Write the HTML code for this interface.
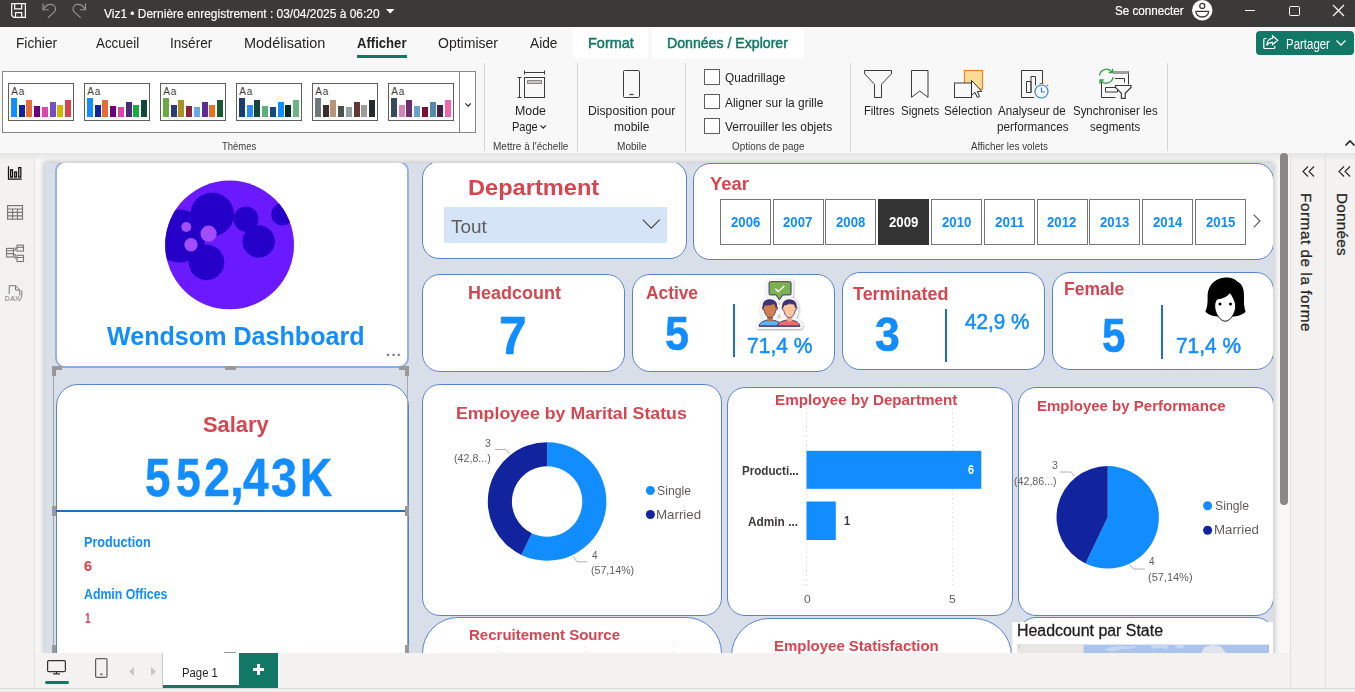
<!DOCTYPE html>
<html><head><meta charset="utf-8"><title>Viz1</title>
<style>
*{box-sizing:border-box;margin:0;padding:0}
html,body{width:1355px;height:692px;overflow:hidden;background:#f3f2f1;font-family:"Liberation Sans",sans-serif;}
.a{position:absolute}
.tx{position:absolute;white-space:nowrap;line-height:1em;transform-origin:0 50%;}
svg{position:absolute;overflow:visible}
#title{left:0;top:0;width:1355px;height:27px;background:#3b3a39}
#tabs{left:0;top:27px;width:1355px;height:126px;background:#f8f8f8}
.sep{position:absolute;top:63px;width:1px;height:88px;background:#d6d4d2}
#left{left:0;top:153px;width:35px;height:535px;background:#f3f2f1;border-right:1px solid #e5e3e1}
#canvasbg{left:35px;top:153px;width:1255px;height:500px;background:#f8f8f8;overflow:hidden}
#shadow{left:0;top:153px;width:1355px;height:8px;background:linear-gradient(#e3e3e3,rgba(240,240,240,0))}
#page{left:45px;top:162.5px;width:1228px;height:490.5px;background:#d8dfe9;overflow:hidden}
#pgsh{left:45px;top:162.5px;width:1228px;height:495px;box-shadow:0 0 6px 1px rgba(0,0,0,.24)}
.card{position:absolute;background:#fff;border:1px solid #5a83cf;border-radius:18px}
#bottom{left:35px;top:653px;width:1255px;height:35px;background:#f3f2f1}
#status{left:0;top:688px;width:1355px;height:4px;background:#f0f0f0;border-top:1px solid #dedede}
#rp1{left:1290px;top:153px;width:36px;height:535px;background:#f3f2f1;border-left:1px solid #e1dfdd}
#rp2{left:1325px;top:153px;width:30px;height:535px;background:#f3f2f1;border-left:1px solid #e1dfdd}
.vt{position:absolute;writing-mode:vertical-rl;font-size:15.3px;color:#252423;white-space:nowrap;line-height:1em}
.th{position:absolute;top:83px;width:66px;height:38px;border:1px solid #605e5c;background:#fff}
.th i{position:absolute;bottom:2.800px;width:5.900px}
.th b{position:absolute;left:2.300px;top:3px;font-size:10px;font-weight:normal;color:#3b3a39;letter-spacing:.8px;line-height:1em}
.cb{position:absolute;left:704.200px;width:15.600px;height:15.600px;border:1px solid #605e5c;background:#fff}
.yb{position:absolute;top:198.5px;width:51px;height:46px;border:1.200px solid #797775;background:#fff}
.h{position:absolute;background:#999}

</style></head><body>
<div id="title" class="a">
<!-- save / undo / redo -->
<svg style="left:0;top:0" width="100" height="27" viewBox="0 0 100 27" fill="none">
<g stroke="#fff" stroke-width="1.200"><path d="M11.700 3.700h13.700v13.700H13.700l-2-2z"/><path d="M14.700 3.700v5.200h7V3.700M15.500 17.400v-4.800h6.200v4.800"/></g>
<g stroke="#979593" stroke-width="1.150"><path d="M43 3.500v6.200h5.700"/><path d="M43.300 9.400c1.700-3.300 4.400-5 7.200-5 2.800 0 5 2 5 4.600 0 1.200-.4 2-1.200 2.800l-6.500 6"/>
<path d="M85.500 3.500v6.200h-5.700"/><path d="M85.200 9.400c-1.700-3.300-4.400-5-7.200-5-2.800 0-5 2-5 4.600 0 1.200.4 2 1.200 2.800l6.500 6"/></g>
</svg>
<svg style="left:386.300px;top:8.800px" width="8.500" height="4.500" viewBox="0 0 8.500 4.500"><path d="M0 0h8.500L4.250 4.500z" fill="#fff"/></svg>
<!-- user -->
<svg style="left:1192px;top:0px" width="20.500" height="20.500" viewBox="0 0 20.500 20.500"><circle cx="10.250" cy="10.250" r="10.200" fill="#fff"/><circle cx="10.250" cy="5.900" r="2.500" fill="none" stroke="#3b3a39" stroke-width="1.300"/><path d="M3.900 11.400h12.700c0 3.300-2.800 5.600-6.350 5.600s-6.350-2.300-6.350-5.600z" fill="none" stroke="#3b3a39" stroke-width="1.300"/></svg>
<!-- window controls -->
<div class="a" style="left:1244.900px;top:9.800px;width:10.500px;height:1.200px;background:#fff"></div>
<div class="a" style="left:1289px;top:5.500px;width:10.500px;height:10.500px;border:1.200px solid #fff;border-radius:1.500px"></div>
<svg style="left:1332.500px;top:5px" width="11" height="11" viewBox="0 0 11 11" stroke="#fff" stroke-width="1.200"><path d="M0 0l11 11M11 0L0 11"/></svg>
</div>
<div id="tabs" class="a"></div>
<!-- contextual tabs white -->
<div class="a" style="left:573px;top:28px;width:75px;height:30px;background:#fff"></div>
<div class="a" style="left:652px;top:28px;width:152px;height:30px;background:#fff"></div>
<div class="a" style="left:357px;top:55.200px;width:50px;height:2.900px;background:#117865"></div>
<!-- Partager -->
<div class="a" style="left:1256px;top:31.200px;width:98px;height:23.500px;background:#117865;border-radius:4px"></div>
<svg style="left:1263px;top:35px" width="16" height="15" viewBox="0 0 16 15" fill="none" stroke="#fff" stroke-width="1.200"><path d="M3.500 3.500H1.800a1 1 0 0 0-1 1v8a1 1 0 0 0 1 1h9a1 1 0 0 0 1-1v-1.500"/><path d="M9.500.8l5.200 4.500-5.200 4.500V7.300C6.500 7.300 4.800 8.300 3.800 10.500 4 6.500 6 3.800 9.500 3.300z"/></svg>
<svg style="left:1336px;top:40px" width="10" height="6" viewBox="0 0 10 6" fill="none" stroke="#fff" stroke-width="1.300"><path d="M.5.500L5 5 9.500.5"/></svg>
<!-- theme gallery -->
<div class="a" style="left:2px;top:70.700px;width:474px;height:62.200px;background:#fff;border:1px solid #8a8886"></div>
<div class="a" style="left:459px;top:71.500px;width:1px;height:61px;background:#8a8886"></div>
<svg style="left:464.700px;top:103.200px" width="6.300" height="4.500" viewBox="0 0 7 5" fill="none" stroke="#252423" stroke-width="1.200"><path d="M.5.500l3 3 3-3"/></svg>
<div class="th" style="left:8px"><b>Aa</b><i style="left:2.00px;height:18.9px;background:#118dff"></i><i style="left:9.74px;height:11.9px;background:#12239e"></i><i style="left:17.48px;height:17.5px;background:#e66c37"></i><i style="left:25.22px;height:10.9px;background:#6b007b"></i><i style="left:32.96px;height:10.4px;background:#e044a7"></i><i style="left:40.70px;height:15.4px;background:#744ec2"></i><i style="left:48.44px;height:12.4px;background:#d9b300"></i><i style="left:56.18px;height:17.5px;background:#d64550"></i></div>
<div class="th" style="left:84px"><b>Aa</b><i style="left:2.00px;height:18.9px;background:#118dff"></i><i style="left:9.74px;height:11.9px;background:#12239e"></i><i style="left:17.48px;height:17.5px;background:#e66c37"></i><i style="left:25.22px;height:10.9px;background:#6b007b"></i><i style="left:32.96px;height:10.4px;background:#e044a7"></i><i style="left:40.70px;height:15.4px;background:#4a2d7a"></i><i style="left:48.44px;height:12.4px;background:#1aab40"></i><i style="left:56.18px;height:17.5px;background:#15463c"></i></div>
<div class="th" style="left:160px"><b>Aa</b><i style="left:2.00px;height:18.9px;background:#6aaa40"></i><i style="left:9.74px;height:11.9px;background:#2e3a77"></i><i style="left:17.48px;height:17.5px;background:#ab9121"></i><i style="left:25.22px;height:10.9px;background:#8c2238"></i><i style="left:32.96px;height:10.4px;background:#6aa8e0"></i><i style="left:40.70px;height:15.4px;background:#5c2c92"></i><i style="left:48.44px;height:12.4px;background:#e8701f"></i><i style="left:56.18px;height:17.5px;background:#1d5632"></i></div>
<div class="th" style="left:236px"><b>Aa</b><i style="left:2.00px;height:18.9px;background:#1a3c73"></i><i style="left:9.74px;height:11.9px;background:#2a8cff"></i><i style="left:17.48px;height:17.5px;background:#15463c"></i><i style="left:25.22px;height:10.9px;background:#5fae7b"></i><i style="left:32.96px;height:10.4px;background:#164a7d"></i><i style="left:40.70px;height:15.4px;background:#118dff"></i><i style="left:48.44px;height:12.4px;background:#0c2a22"></i><i style="left:56.18px;height:17.5px;background:#6bb584"></i></div>
<div class="th" style="left:312px"><b>Aa</b><i style="left:2.00px;height:18.9px;background:#6e7b7b"></i><i style="left:9.74px;height:11.9px;background:#3b2c2c"></i><i style="left:17.48px;height:17.5px;background:#b8957a"></i><i style="left:25.22px;height:10.9px;background:#4a4f4f"></i><i style="left:32.96px;height:10.4px;background:#8fa3a3"></i><i style="left:40.70px;height:15.4px;background:#5e3a32"></i><i style="left:48.44px;height:12.4px;background:#a09b94"></i><i style="left:56.18px;height:17.5px;background:#252a2c"></i></div>
<div class="th" style="left:388px"><b>Aa</b><i style="left:2.00px;height:18.9px;background:#384a5e"></i><i style="left:9.74px;height:11.9px;background:#d383b6"></i><i style="left:17.48px;height:17.5px;background:#6c2e6c"></i><i style="left:25.22px;height:10.9px;background:#6aa2cf"></i><i style="left:32.96px;height:10.4px;background:#7a0e3a"></i><i style="left:40.70px;height:15.4px;background:#5588aa"></i><i style="left:48.44px;height:12.4px;background:#41234a"></i><i style="left:56.18px;height:17.5px;background:#f066ac"></i></div>
<div class="sep" style="left:484px"></div><div class="sep" style="left:576.500px"></div><div class="sep" style="left:685px"></div><div class="sep" style="left:850px"></div><div class="sep" style="left:1166.500px"></div>
<!-- Mode page icon -->
<svg style="left:517px;top:70px" width="29" height="28" viewBox="0 0 29 28" fill="none" stroke="#3b3a39" stroke-width="1"><path d="M7.500 2.500h20M7.500.5v4M27.500.5v4"/><path d="M2.500 7.500v20M.5 7.500h4M.5 27.500h4"/><rect x="7.500" y="7.500" width="20" height="20"/><rect x="10.500" y="10.500" width="14" height="3" fill="#c8c6c4" stroke="#8a8886"/></svg>
<svg style="left:540.300px;top:125.300px" width="6.300" height="4.500" viewBox="0 0 7 5" fill="none" stroke="#252423" stroke-width="1.200"><path d="M.5.500l3 3 3-3"/></svg>
<!-- mobile icon -->
<svg style="left:623px;top:70px" width="17" height="28" viewBox="0 0 17 28" fill="none" stroke="#3b3a39" stroke-width="1"><rect x=".5" y=".5" width="16" height="27" rx="1"/><path d="M6.500 24.500h4" stroke-width="1.200"/></svg>
<div class="cb" style="top:69.200px"></div><div class="cb" style="top:93.700px"></div><div class="cb" style="top:118.200px"></div>
<!-- filter -->
<svg style="left:864.200px;top:70px" width="28" height="28" viewBox="0 0 28 28" fill="none" stroke="#3b3a39" stroke-width="1"><path d="M.5.500h27v3.200L17.500 14.300v13.200h-7V14.300L.5 3.700z"/></svg>
<!-- bookmark -->
<svg style="left:910.800px;top:70px" width="17.500" height="28" viewBox="0 0 17.500 28" fill="none" stroke="#3b3a39" stroke-width="1"><path d="M.5.500h16.500v26.800l-8.250-6.300-8.250 6.300z"/></svg>
<!-- selection -->
<svg style="left:954px;top:70px" width="32" height="30" viewBox="0 0 32 30"><rect x="10.500" y=".5" width="18" height="18.500" fill="#fbdc97" stroke="#e8852b" stroke-width="1.200"/><rect x=".5" y="13" width="17" height="14.500" fill="#f8f8f8" stroke="#3b3a39" stroke-width="1"/><path d="M17.500 10.500v15l3.500-3.200 2.300 5.200 2.300-1-2.300-5 4.500-.2z" fill="#fff" stroke="#252423" stroke-width="1"/></svg>
<!-- analyseur -->
<svg style="left:1020.500px;top:70px" width="29" height="30" viewBox="0 0 29 30" fill="none" stroke="#3b3a39" stroke-width="1"><path d="M13 27.500H.5V.5h21v13"/><path d="M5.500 22.500v-11h4.500v11zM10 22.500V6.500h4.500v9"/><circle cx="20.500" cy="21.500" r="6.500" stroke="#2b88d8" stroke-width="1.200" fill="#f8f8f8"/><path d="M20.500 17.500v4.500h3.500M18.500 13.500h4M26 15l1.200 1.200" stroke="#2b88d8" stroke-width="1.200"/></svg>
<!-- synchroniser -->
<svg style="left:1098px;top:68px" width="34" height="31" viewBox="0 0 34 31" fill="none" stroke="#3b3a39" stroke-width="1"><path d="M15 3.500h15.500v13"/><rect x="15" y="3" width="15.500" height="3" fill="#a19f9d" stroke="none"/><path d="M17 10.500h9.500v4M3.500 14v15.500h14"/><path d="M7.500 19.500h12v4.500h-12z"/><path d="M17.500 17.500h15.500v2l-5.800 5.800v5h-3.800v-5l-5.900-5.800z" fill="#f8f8f8" stroke-width="1.200"/><path d="M1.500 7.500a7 7 0 0 1 12.500-3.500M15 9a7 7 0 0 1-12.500 3.500" stroke="#2ca045" stroke-width="1.300"/><path d="M14.500.8v3.700h-3.700M2 15.700v-3.700h3.700" stroke="#2ca045" stroke-width="1.300"/></svg>
<svg style="left:1345px;top:140px" width="10" height="6" viewBox="0 0 10 6" fill="none" stroke="#252423" stroke-width="1.600"><path d="M.5 5.500L5 1l4.500 4.500"/></svg>
<div id="left" class="a"></div>
<div id="canvasbg" class="a"><div id="pgsh" class="a" style="left:10px;top:9.500px"></div></div>
<div id="rp1" class="a"></div><div id="rp2" class="a"></div>
<div id="shadow" class="a"></div>
<!-- left icons -->
<svg style="left:0;top:0" width="35" height="320" viewBox="0 0 35 320" fill="none">
<g stroke="#111" stroke-width="1.250"><path d="M8.500 166.200v12.900h13.300"/><rect x="10.600" y="169.800" width="1.900" height="7.300"/><rect x="14.700" y="172" width="1.800" height="5.100"/><rect x="18.700" y="167.600" width="2.100" height="9.500"/></g>
<g stroke="#797775" stroke-width="1.200"><rect x="7.600" y="205.600" width="14.900" height="13.600"/><path d="M7.600 209h14.900M7.600 212.400h14.900M7.600 215.800h14.900M12.600 209v10.200M17.500 209v10.200"/></g>
<g stroke="#797775" stroke-width="1.100"><rect x="17" y="245.100" width="6.500" height="6"/><path d="M17 247.300h6.500"/><rect x="6.500" y="248.400" width="7" height="8.600"/><path d="M6.500 250.800h7M6.500 253.600h7"/><rect x="17" y="255.300" width="6.500" height="6.200"/><path d="M17 257.500h6.500M13.500 250.300h1.700v-2.300h1.800M13.500 254.500h1.700v3.800h1.800"/></g>
<g stroke="#797775" stroke-width="1"><path d="M9.200 294v-8.300h6.300l4.300 4.300v5.500M15.500 285.700v4.300h4.300"/><path d="M21.800 290.500c.4 4.500-.3 8-2.300 10.200"/></g>
</svg>
<span class="tx" style="left:4.800px;top:295.300px;font-size:7px;color:#797775;letter-spacing:.3px">DAX</span>
<!-- right panes -->
<svg style="left:1302px;top:165.500px" width="13" height="11" viewBox="0 0 13 11" fill="none" stroke="#252423" stroke-width="1.100"><path d="M6 .5l-5 5 5 5M12 .5l-5 5 5 5"/></svg>
<svg style="left:1337.500px;top:165.500px" width="13" height="11" viewBox="0 0 13 11" fill="none" stroke="#252423" stroke-width="1.100"><path d="M6 .5l-5 5 5 5M12 .5l-5 5 5 5"/></svg>
<div class="vt" style="left:1299px;top:192.500px;letter-spacing:.55px;-webkit-text-stroke:.25px #252423">Format de la forme</div>
<div class="vt" style="left:1334.400px;top:192.800px;letter-spacing:.25px;-webkit-text-stroke:.25px #252423">Données</div>
<!-- scrollbar -->
<div class="a" style="left:1280px;top:153px;width:7.500px;height:352px;background:#8a8886;border-radius:4px"></div>
<div id="page" class="a">
<!-- all coords inside page are relative: px = X-45, py = Y-162.5 -->
<div class="card" style="left:10px;top:-2px;width:353.500px;height:207.300px;border-radius:10px;border:2px solid #98b1df"></div>
<div class="card" style="left:10.500px;top:221.300px;width:353px;height:300px;border-radius:22px"></div>
<div class="card" style="left:377px;top:-1.200px;width:265px;height:97.200px;border-radius:17px"></div>
<div class="card" style="left:647.500px;top:.4px;width:581.800px;height:96.900px;border-radius:17px"></div>
<div class="card" style="left:377px;top:111.500px;width:203px;height:97.500px"></div>
<div class="card" style="left:587px;top:111.500px;width:203px;height:97.500px"></div>
<div class="card" style="left:796.500px;top:109.500px;width:203px;height:97.500px"></div>
<div class="card" style="left:1007px;top:109.500px;width:222.300px;height:97.500px"></div>
<div class="card" style="left:377px;top:221.400px;width:299.500px;height:232.100px"></div>
<div class="card" style="left:682px;top:224.300px;width:285.500px;height:228.800px"></div>
<div class="card" style="left:973px;top:224.200px;width:256.300px;height:229px"></div>
<div class="card" style="left:377px;top:454.500px;width:299.500px;height:100px;border-radius:36px"></div>
<div class="card" style="left:686px;top:455.500px;width:280.500px;height:100px;border-radius:38px"></div>
<div class="card" style="left:973px;top:454.500px;width:256.300px;height:100px"></div>
<!-- moon -->
<svg style="left:120px;top:17.500px" width="130" height="130" viewBox="165 180 130 130">
<defs><clipPath id="mc"><circle cx="229.600" cy="244.900" r="64.400"/></clipPath></defs>
<circle cx="229.600" cy="244.900" r="64.400" fill="#6b1aff"/>
<g clip-path="url(#mc)" fill="#2400c8"><circle cx="212.200" cy="214.400" r="21.800"/><circle cx="179.200" cy="235.900" r="26.500"/><circle cx="206.500" cy="262.400" r="17.800"/><circle cx="258.700" cy="241.400" r="16.200"/><circle cx="246" cy="219.100" r="12.500"/><circle cx="282.400" cy="214.400" r="11.100"/></g>
<g fill="#a24dff"><circle cx="186.300" cy="227" r="5"/><circle cx="208.600" cy="233.700" r="8.100"/><circle cx="191" cy="244.800" r="6.700"/></g>
</svg>
<span class="tx" style="left:341px;top:181.500px;font-size:14.500px;color:#7a7876;letter-spacing:1.400px;font-weight:bold">...</span>
<!-- salary divider -->
<div class="a" style="left:11px;top:347.500px;width:352px;height:2px;background:#1f6fc4"></div>
<!-- department slicer -->
<div class="a" style="left:399px;top:44.700px;width:223px;height:35.600px;background:#d5e5f7"></div>
<svg style="left:597.200px;top:56.700px" width="18.500" height="10" viewBox="0 0 20 11" fill="none" stroke="#444" stroke-width="1.300"><path d="M.7.700L10 10 19.300.7"/></svg>
<!-- years -->
<div class="yb" style="left:674.7px;top:36px"></div>
<div class="yb" style="left:727.5px;top:36px"></div>
<div class="yb" style="left:780.3px;top:36px"></div>
<div class="yb" style="left:833.1px;top:36px;background:#333;border-color:#333"></div>
<div class="yb" style="left:885.9px;top:36px"></div>
<div class="yb" style="left:938.7px;top:36px"></div>
<div class="yb" style="left:991.5px;top:36px"></div>
<div class="yb" style="left:1044.3px;top:36px"></div>
<div class="yb" style="left:1097.1px;top:36px"></div>
<div class="yb" style="left:1149.9px;top:36px"></div>

<svg style="left:1208.300px;top:51.500px" width="8" height="14" viewBox="0 0 8 14" fill="none" stroke="#605e5c" stroke-width="1.200"><path d="M.7.700L7 7 .7 13.300"/></svg>
<!-- KPI vlines -->
<div class="a" style="left:688.300px;top:141.600px;width:2px;height:53.200px;background:#1b6fc6"></div>
<div class="a" style="left:900.200px;top:146.500px;width:2px;height:53px;background:#1b6fc6"></div>
<div class="a" style="left:1116.400px;top:142.500px;width:2px;height:53.500px;background:#1b6fc6"></div>
<svg style="left:0;top:0" width="1229" height="490.500" viewBox="45 162.500 1229 490.500">
<defs><filter id="sh" x="-20%" y="-20%" width="140%" height="140%"><feDropShadow dx=".6" dy=".8" stdDeviation=".8" flood-color="#000" flood-opacity=".4"/></filter></defs>
<g transform="translate(-.2 .2)"><!-- people icon : white sticker base -->
<g filter="url(#sh)" fill="#f7f7f7" stroke="#f7f7f7" stroke-width="5.600" stroke-linejoin="round">
<path d="M769.500 281h21v13h-7.500l-3.400 5.200-3.400-5.200h-6.700z"/>
<path d="M759 325.500c.5-3.500 3-5 7.500-6v-3c-3-2-3.500-5-3.500-8 0-6 3-9.500 7-9.500s7 3.500 7 9.500c0 3-.5 6-3.500 8v3l6 1.300 6-1.300v-3c-3-2-3.500-5-3.500-8 0-6 3-9.500 7-9.500s7 3.500 7 9.500c0 3-.5 6-3.500 8v3c4.500 1 7 2.500 7.500 6z"/>
</g>
<!-- bubble -->
<path d="M770.500 281h19.500a1.200 1.200 0 0 1 1.200 1.200v10.800a1.200 1.200 0 0 1-1.200 1.200h-7l-3.400 5-3.400-5h-5.700a1.200 1.200 0 0 1-1.200-1.200v-10.800a1.200 1.200 0 0 1 1.200-1.200z" fill="#7db04e" stroke="#3c3170" stroke-width="1"/>
<path d="M775.500 288l3 2.800 6-5.500" fill="none" stroke="#fff" stroke-width="1.300"/>
<!-- left person -->
<path d="M759.300 325.300c.5-3.300 3-4.800 8.200-5.800h5.600c3 .6 5 1.300 6.300 2.300l-1.800 3.500z" fill="#5cb1f5" stroke="#3c3170" stroke-width=".9"/>
<path d="M767.500 316v3.800c1.500 1.200 4 1.200 5.500 0V316z" fill="#c07040"/>
<path d="M764.200 306c-1.300-.3-1.800.8-1.500 2 .3 1 1 1.500 1.800 1.500.5 4 2.700 7.500 5.700 7.500s5.200-3.500 5.700-7.500c.8 0 1.500-.5 1.800-1.500.3-1.200-.2-2.300-1.500-2v-3h-12z" fill="#d17f4b" stroke="#3c3170" stroke-width=".8"/>
<path d="M763 307.500c-1-5.500 2-9 7-9s8.500 3.500 7 9l-1.200-.2c-.2-1.800-.8-3.300-1.800-4.300-2.500 1.600-6 2-9 1.500-.4.800-.7 1.800-.8 2.800z" fill="#3f3373"/>
<!-- right person -->
<path d="M778 325.300c.5-3.300 3-4.800 8.200-5.800h5.600c5.200 1 7.700 2.500 8.200 5.800z" fill="#f06a6a" stroke="#3c3170" stroke-width=".9"/>
<path d="M787 316v3.800c1.500 1.200 4 1.200 5.500 0V316z" fill="#eeb088"/>
<path d="M783.700 306c-1.300-.3-1.800.8-1.500 2 .3 1 1 1.500 1.800 1.500.5 4 2.700 7.500 5.700 7.500s5.200-3.500 5.700-7.500c.8 0 1.500-.5 1.800-1.500.3-1.200-.2-2.300-1.500-2v-3h-12z" fill="#fcc59b" stroke="#3c3170" stroke-width=".8"/>
<path d="M782.500 307.500c-1-5.500 2-9 7-9s8.500 3.500 7 9l-1.200-.2c-.2-1.500-.6-2.800-1.300-3.800-1.500.3-3-.3-4-1.500-1.500 1.800-3.700 2.700-6 2.700-.3.800-.4 1.700-.5 2.600z" fill="#3f3373"/>
<path d="M759 325.500h41.500" stroke="#3c3170" stroke-width="1.100"/>
</g><!-- woman icon -->
<path d="M1225 277c7-.5 10.500 2 12.500 4.300 5 2.200 6.800 8 6.500 15-.2 6 .2 11.500 1.600 15 -3.500 3.500-9 4.700-13.500 4.800l-13.500 0c-4.500 0-9.700-1.300-13.300-4.800 2-4 2.500-9 2.300-15-.3-9 5-18.300 17.400-19.300z" fill="#000"/>
<path d="M1230 292c2.500 3.500 5.700 9 5.700 13.500 0 7-5.500 15.200-10.500 15.200s-10.500-8.200-10.500-15.200c0-3 1-5.500 2.500-7 6-.8 10.500-3 12.800-6.500z" fill="#fff" stroke="#000" stroke-width=".9"/>
<circle cx="1220" cy="303.400" r="1.500"/><circle cx="1230.500" cy="303.400" r="1.500"/>
</svg>

<svg style="left:0;top:0" width="1229" height="490.500" viewBox="45 162.500 1229 490.500">
<!-- donut -->
<g transform="translate(0 -.8)"><path d="M547.100 442.500A59.300 59.300 0 1 1 521.370 555.230L531.830 533.510A35.200 35.200 0 1 0 547.100 466.600z" fill="#118dff"/>
<path d="M521.370 555.230A59.300 59.300 0 0 1 547.100 442.500V466.600A35.200 35.200 0 0 0 531.830 533.510z" fill="#12239e"/></g>
<path d="M494.800 449h11.200l4.100 4.500M573.300 555.900l3.600 5.400h10.400" fill="none" stroke="#b3b0ad" stroke-width="1"/>
<circle cx="650.400" cy="490" r="4.500" fill="#118dff"/><circle cx="650.400" cy="514" r="4.500" fill="#12239e"/>
<!-- bars -->
<path d="M806.500 408v180M952.400 408v180" stroke="#cfcdcb" stroke-width="1" stroke-dasharray="1 3.500"/>
<rect x="806.500" y="450.300" width="174.800" height="38" fill="#118dff"/>
<rect x="806.500" y="501" width="29.300" height="38.500" fill="#118dff"/>
<!-- pie -->
<path d="M1107.700 516.800V465.600A51.200 51.200 0 1 1 1085.500 562.930z" fill="#118dff"/>
<path d="M1107.700 516.800L1085.500 562.930A51.200 51.200 0 0 1 1107.700 465.600z" fill="#12239e"/>
<path d="M1059.700 471.500h11.300l3.600 4.100M1129.600 564l4.100 4.500h11.300" fill="none" stroke="#b3b0ad" stroke-width="1"/>
<circle cx="1207.600" cy="505.300" r="4.500" fill="#118dff"/><circle cx="1207.600" cy="529.700" r="4.500" fill="#12239e"/>
<!-- headcount par state -->
<rect x="1012.300" y="621.500" width="261" height="32" fill="#fff"/>
<rect x="1017" y="644.100" width="252" height="10" fill="#aac4ee"/>
<rect x="1017" y="644.100" width="66.500" height="10" fill="#e9e7e2"/>
<path d="M1017 644.100l4 3.500M1021 644.100l-3.500 4" stroke="#c9d6c0" stroke-width="1"/>
<g fill="#c7d5ee"><path d="M1104.2 649.3l6.2 -2.9 10.3 -1.2 8.3 0.8 8.3 -0.8 -4.1 2.9 -12.4 0.8 -8.3 2.1z"/><path d="M1149.7 644.1h18.6l-1.0 5.2 -6.2 -2.1 -8.3 1.0z"/><path d="M1174.5 644.7l10.3 -0.4 -2.1 3.3 -6.2 0.4z"/></g><path d="M1201.3 652.8l3.1 -6.2 8.3 -2.1 8.3 1.7 5.2 6.6z" fill="#dfe4ec"/>
<!-- recruit gridlines -->
<path d="M498 646v8M585.600 646v8M673.400 642v12" stroke="#d6d4d2" stroke-width="1" stroke-dasharray="1 3.500"/>
</svg>

</div>
<!-- selection frame -->
<div class="a" style="left:53px;top:367px;width:354.500px;height:1.200px;background:#a6a6a6"></div>
<div class="a" style="left:53px;top:367px;width:1px;height:284px;background:#a6a6a6"></div>
<div class="a" style="left:406.500px;top:367px;width:1px;height:284px;background:#a6a6a6"></div>
<div class="h" style="left:52px;top:366px;width:10px;height:4px"></div><div class="h" style="left:52px;top:366px;width:4px;height:10px"></div>
<div class="h" style="left:399px;top:366px;width:10px;height:4px"></div><div class="h" style="left:405px;top:366px;width:4px;height:10px"></div>
<div class="h" style="left:224.500px;top:366px;width:11px;height:4px"></div>
<div class="h" style="left:52px;top:506px;width:4px;height:10px"></div><div class="h" style="left:405px;top:506px;width:4px;height:10px"></div>
<div class="h" style="left:52px;top:645px;width:4px;height:8px"></div><div class="h" style="left:405px;top:645px;width:4px;height:8px"></div>
<div class="h" style="left:224.300px;top:651.700px;width:11.500px;height:1.300px"></div>
<div id="bottom" class="a"></div>
<!-- bottom bar -->
<svg style="left:46.900px;top:660px" width="19" height="14.500" viewBox="0 0 19 14.500" fill="none" stroke="#323130" stroke-width="1.200"><rect x=".6" y=".6" width="17.800" height="11" rx="1.200"/><path d="M9.500 11.600v2.200M6 13.800h7"/></svg>
<div class="a" style="left:45px;top:681px;width:24px;height:3px;background:#117865;border-radius:1.500px"></div>
<svg style="left:94.800px;top:658px" width="12.600" height="20" viewBox="0 0 12.600 20" fill="none" stroke="#605e5c" stroke-width="1.200"><rect x=".6" y=".6" width="11.400" height="18.800" rx="1.500"/><path d="M5.200 16.300h2.400" stroke-width="1.500"/></svg>
<svg style="left:129px;top:667px" width="5" height="9" viewBox="0 0 5 9"><path d="M5 0v9L0 4.500z" fill="#c8c6c4"/></svg>
<svg style="left:151px;top:667px" width="5" height="9" viewBox="0 0 5 9"><path d="M0 0v9l5-4.500z" fill="#c8c6c4"/></svg>
<div class="a" style="left:162.500px;top:653px;width:76.200px;height:35px;background:#fff;border-bottom:3.600px solid #117865;"></div><div class="a" style="left:162.200px;top:653px;width:1px;height:35px;background:#c8c6c4"></div>
<div class="a" style="left:238.800px;top:653px;width:39px;height:35px;background:#117865"></div>
<div class="a" style="left:252.800px;top:668.200px;width:11px;height:2.600px;background:#fff"></div><div class="a" style="left:257px;top:664px;width:2.600px;height:11px;background:#fff"></div>
<div id="status" class="a"></div>

<!--TEXT-->
<span class="tx" style="left:104.07px;top:8.00px;font-size:12px;color:#fff;-webkit-text-stroke:0.15px #fff;transform:scaleX(0.9953);">Viz1 • Dernière enregistrement : 03/04/2025 à 06:20</span>
<span class="tx" style="left:1114.59px;top:5.30px;font-size:12.5px;color:#fff;-webkit-text-stroke:0.2px #fff;transform:scaleX(0.9322);">Se connecter</span>
<span class="tx" style="left:16.08px;top:36.20px;font-size:14.8px;color:#252423;transform:scaleX(0.9248);">Fichier</span>
<span class="tx" style="left:95.90px;top:36.20px;font-size:14.8px;color:#252423;transform:scaleX(0.9048);">Accueil</span>
<span class="tx" style="left:170.48px;top:36.20px;font-size:14.8px;color:#252423;transform:scaleX(0.9175);">Insérer</span>
<span class="tx" style="left:244.42px;top:36.20px;font-size:14.8px;color:#252423;transform:scaleX(0.9787);">Modélisation</span>
<span class="tx" style="left:357.00px;top:36.20px;font-size:14.8px;color:#252423;font-weight:bold;transform:scaleX(0.8851);">Afficher</span>
<span class="tx" style="left:437.90px;top:36.20px;font-size:14.8px;color:#252423;transform:scaleX(0.9483);">Optimiser</span>
<span class="tx" style="left:530.00px;top:36.20px;font-size:14.8px;color:#252423;transform:scaleX(0.9290);">Aide</span>
<span class="tx" style="left:587.67px;top:36.20px;font-size:14.8px;color:#117865;-webkit-text-stroke:0.5px #117865;transform:scaleX(0.9773);">Format</span>
<span class="tx" style="left:667.48px;top:36.20px;font-size:14.8px;color:#117865;-webkit-text-stroke:0.5px #117865;transform:scaleX(0.9546);">Données / Explorer</span>
<span class="tx" style="left:1286.48px;top:36.50px;font-size:14px;color:#fff;transform:scaleX(0.8183);">Partager</span>
<span class="tx" style="left:515.00px;top:105.00px;font-size:12px;color:#252423;transform:scaleX(1.0315);">Mode</span>
<span class="tx" style="left:511.80px;top:121.00px;font-size:12px;color:#252423;transform:scaleX(0.9171);">Page</span>
<span class="tx" style="left:588.40px;top:105.00px;font-size:12px;color:#252423;transform:scaleX(1.0157);">Disposition pour</span>
<span class="tx" style="left:613.50px;top:121.00px;font-size:12px;color:#252423;transform:scaleX(1.0007);">mobile</span>
<span class="tx" style="left:864.00px;top:105.00px;font-size:12px;color:#252423;transform:scaleX(0.9337);">Filtres</span>
<span class="tx" style="left:900.80px;top:105.00px;font-size:12px;color:#252423;transform:scaleX(0.9544);">Signets</span>
<span class="tx" style="left:943.50px;top:105.00px;font-size:12px;color:#252423;transform:scaleX(0.9755);">Sélection</span>
<span class="tx" style="left:998.00px;top:105.00px;font-size:12px;color:#252423;transform:scaleX(0.9663);">Analyseur de</span>
<span class="tx" style="left:996.70px;top:121.00px;font-size:12px;color:#252423;transform:scaleX(0.9746);">performances</span>
<span class="tx" style="left:1072.70px;top:105.00px;font-size:12px;color:#252423;transform:scaleX(0.9537);">Synchroniser les</span>
<span class="tx" style="left:1089.80px;top:121.00px;font-size:12px;color:#252423;transform:scaleX(0.9649);">segments</span>
<span class="tx" style="left:724.70px;top:71.80px;font-size:12px;color:#252423;transform:scaleX(0.9838);">Quadrillage</span>
<span class="tx" style="left:724.70px;top:97.00px;font-size:12px;color:#252423;transform:scaleX(0.9956);">Aligner sur la grille</span>
<span class="tx" style="left:724.70px;top:120.80px;font-size:12px;color:#252423;transform:scaleX(0.9912);">Verrouiller les objets</span>
<span class="tx" style="left:222.00px;top:141.00px;font-size:10.5px;color:#3b3a39;transform:scaleX(0.9024);">Thèmes</span>
<span class="tx" style="left:492.80px;top:141.00px;font-size:10.5px;color:#3b3a39;transform:scaleX(0.9545);">Mettre à l'échelle</span>
<span class="tx" style="left:616.80px;top:141.00px;font-size:10.5px;color:#3b3a39;transform:scaleX(0.9585);">Mobile</span>
<span class="tx" style="left:732.00px;top:141.00px;font-size:10.5px;color:#3b3a39;transform:scaleX(0.9415);">Options de page</span>
<span class="tx" style="left:971.00px;top:141.00px;font-size:10.5px;color:#3b3a39;transform:scaleX(0.9359);">Afficher les volets</span>
<span class="tx" style="left:107.30px;top:324.20px;font-size:25.6px;color:#118dff;font-weight:bold;transform:scaleX(0.9809);">Wendsom Dashboard</span>
<span class="tx" style="left:202.60px;top:414.00px;font-size:22.5px;color:#d64550;font-weight:bold;transform:scaleX(0.9729);">Salary</span>
<span class="tx" style="left:145.47px;top:450.10px;font-size:54px;color:#118dff;font-weight:bold;-webkit-text-stroke:0.5px #118dff;transform:scaleX(0.8456);">5</span>
<span class="tx" style="left:175.58px;top:450.10px;font-size:54px;color:#118dff;font-weight:bold;-webkit-text-stroke:0.5px #118dff;transform:scaleX(0.8211);">5</span>
<span class="tx" style="left:204.45px;top:450.10px;font-size:54px;color:#118dff;font-weight:bold;-webkit-text-stroke:0.5px #118dff;transform:scaleX(0.8655);">2</span>
<span class="tx" style="left:229.85px;top:450.10px;font-size:54px;color:#118dff;font-weight:bold;-webkit-text-stroke:0.5px #118dff;transform:scaleX(0.9263);">,</span>
<span class="tx" style="left:242.71px;top:450.10px;font-size:54px;color:#118dff;font-weight:bold;-webkit-text-stroke:0.5px #118dff;transform:scaleX(0.8525);">4</span>
<span class="tx" style="left:270.55px;top:450.10px;font-size:54px;color:#118dff;font-weight:bold;-webkit-text-stroke:0.5px #118dff;transform:scaleX(0.8632);">3</span>
<span class="tx" style="left:300.34px;top:450.10px;font-size:54px;color:#118dff;font-weight:bold;-webkit-text-stroke:0.5px #118dff;transform:scaleX(0.8219);">K</span>
<span class="tx" style="left:84.00px;top:535.00px;font-size:14px;color:#118dff;font-weight:bold;transform:scaleX(0.9041);">Production</span>
<span class="tx" style="left:84.00px;top:558.50px;font-size:14.5px;color:#d64550;font-weight:bold;transform:scaleX(1.0000);">6</span>
<span class="tx" style="left:84.00px;top:587.00px;font-size:14px;color:#118dff;font-weight:bold;transform:scaleX(0.8779);">Admin Offices</span>
<span class="tx" style="left:84.50px;top:610.50px;font-size:14.5px;color:#d64550;font-weight:bold;transform:scaleX(0.6875);">1</span>
<span class="tx" style="left:467.89px;top:177.00px;font-size:21.2px;color:#d64550;font-weight:bold;transform:scaleX(1.1142);">Department</span>
<span class="tx" style="left:451.00px;top:219.30px;font-size:17.6px;color:#605e5c;transform:scaleX(1.0789);">Tout</span>
<span class="tx" style="left:710.40px;top:175.30px;font-size:18.8px;color:#d64550;font-weight:bold;transform:scaleX(0.9807);">Year</span>
<span class="tx" style="left:468.00px;top:284.00px;font-size:18px;color:#d64550;font-weight:bold;transform:scaleX(0.9988);">Headcount</span>
<span class="tx" style="left:499.33px;top:309.20px;font-size:53.5px;color:#118dff;font-weight:bold;-webkit-text-stroke:0.6px #118dff;transform:scaleX(0.9248);">7</span>
<span class="tx" style="left:645.90px;top:284.00px;font-size:18px;color:#d64550;font-weight:bold;transform:scaleX(0.9627);">Active</span>
<span class="tx" style="left:665.38px;top:309.20px;font-size:49px;color:#118dff;font-weight:bold;-webkit-text-stroke:0.6px #118dff;transform:scaleX(0.8789);">5</span>
<span class="tx" style="left:746.56px;top:336.30px;font-size:21.3px;color:#118dff;-webkit-text-stroke:0.5px #118dff;transform:scaleX(0.9884);">71,4 %</span>
<span class="tx" style="left:853.00px;top:285.30px;font-size:18px;color:#d64550;font-weight:bold;transform:scaleX(0.9969);">Terminated</span>
<span class="tx" style="left:875.06px;top:309.60px;font-size:49px;color:#118dff;font-weight:bold;-webkit-text-stroke:0.6px #118dff;transform:scaleX(0.9102);">3</span>
<span class="tx" style="left:964.84px;top:311.80px;font-size:21.3px;color:#118dff;-webkit-text-stroke:0.5px #118dff;transform:scaleX(0.9706);">42,9 %</span>
<span class="tx" style="left:1064.23px;top:280.30px;font-size:18px;color:#d64550;font-weight:bold;transform:scaleX(0.9718);">Female</span>
<span class="tx" style="left:1102.40px;top:310.70px;font-size:49px;color:#118dff;font-weight:bold;-webkit-text-stroke:0.6px #118dff;transform:scaleX(0.8594);">5</span>
<span class="tx" style="left:1176.27px;top:336.00px;font-size:21.3px;color:#118dff;-webkit-text-stroke:0.5px #118dff;transform:scaleX(0.9792);">71,4 %</span>
<span class="tx" style="left:456.38px;top:404.60px;font-size:17.4px;color:#d64550;font-weight:bold;transform:scaleX(1.0206);">Employee by Marital Status</span>
<span class="tx" style="left:484.50px;top:437.60px;font-size:11.5px;color:#605e5c;transform:scaleX(0.9167);">3</span>
<span class="tx" style="left:454.20px;top:452.80px;font-size:11.5px;color:#605e5c;transform:scaleX(0.9297);">(42,8...)</span>
<span class="tx" style="left:591.50px;top:549.70px;font-size:11.5px;color:#605e5c;transform:scaleX(0.8571);">4</span>
<span class="tx" style="left:591.30px;top:564.80px;font-size:11.5px;color:#605e5c;transform:scaleX(0.9246);">(57,14%)</span>
<span class="tx" style="left:657.20px;top:483.70px;font-size:13px;color:#605e5c;transform:scaleX(0.9413);">Single</span>
<span class="tx" style="left:656.18px;top:507.70px;font-size:13px;color:#605e5c;transform:scaleX(1.0225);">Married</span>
<span class="tx" style="left:774.50px;top:392.80px;font-size:14.5px;color:#d64550;font-weight:bold;transform:scaleX(1.0475);">Employee by Department</span>
<span class="tx" style="left:741.50px;top:465.00px;font-size:12px;color:#3b3a39;font-weight:bold;transform:scaleX(0.9685);">Producti...</span>
<span class="tx" style="left:748.30px;top:516.00px;font-size:12px;color:#3b3a39;font-weight:bold;transform:scaleX(0.9874);">Admin ...</span>
<span class="tx" style="left:967.50px;top:463.50px;font-size:12px;color:#fff;font-weight:bold;transform:scaleX(0.9000);">6</span>
<span class="tx" style="left:844.30px;top:515.00px;font-size:12px;color:#3b3a39;font-weight:bold;transform:scaleX(0.9286);">1</span>
<span class="tx" style="left:804.00px;top:594.00px;font-size:11.5px;color:#605e5c;transform:scaleX(1.0500);">0</span>
<span class="tx" style="left:949.40px;top:594.00px;font-size:11.5px;color:#605e5c;transform:scaleX(1.0500);">5</span>
<span class="tx" style="left:1037.03px;top:397.60px;font-size:15.5px;color:#d64550;font-weight:bold;transform:scaleX(0.9687);">Employee by Performance</span>
<span class="tx" style="left:1051.50px;top:460.00px;font-size:11.5px;color:#605e5c;transform:scaleX(0.9167);">3</span>
<span class="tx" style="left:1014.20px;top:475.70px;font-size:11.5px;color:#605e5c;transform:scaleX(0.9265);">(42,86...)</span>
<span class="tx" style="left:1148.50px;top:556.30px;font-size:11.5px;color:#605e5c;transform:scaleX(0.8571);">4</span>
<span class="tx" style="left:1147.60px;top:572.00px;font-size:11.5px;color:#605e5c;transform:scaleX(0.9545);">(57,14%)</span>
<span class="tx" style="left:1214.80px;top:499.00px;font-size:13px;color:#605e5c;transform:scaleX(0.9413);">Single</span>
<span class="tx" style="left:1213.78px;top:523.30px;font-size:13px;color:#605e5c;transform:scaleX(1.0202);">Married</span>
<span class="tx" style="left:469.00px;top:627.30px;font-size:15px;color:#d64550;font-weight:bold;transform:scaleX(1.0011);">Recruitement Source</span>
<span class="tx" style="left:774.40px;top:637.50px;font-size:15px;color:#d64550;font-weight:bold;transform:scaleX(0.9977);">Employee Statisfaction</span>
<span class="tx" style="left:1016.53px;top:622.80px;font-size:15.6px;color:#201f1e;-webkit-text-stroke:0.3px #201f1e;transform:scaleX(1.0207);">Headcount par State</span>
<span class="tx" style="left:182.49px;top:666.50px;font-size:12.5px;color:#252423;transform:scaleX(0.9052);">Page 1</span>
<span class="tx" style="left:730.60px;top:214.80px;font-size:14px;color:#118dff;font-weight:bold;transform:scaleX(0.9407);">2006</span>
<span class="tx" style="left:783.40px;top:214.80px;font-size:14px;color:#118dff;font-weight:bold;transform:scaleX(0.9407);">2007</span>
<span class="tx" style="left:836.20px;top:214.80px;font-size:14px;color:#118dff;font-weight:bold;transform:scaleX(0.9407);">2008</span>
<span class="tx" style="left:889.00px;top:214.80px;font-size:14px;color:#fff;font-weight:bold;transform:scaleX(0.9407);">2009</span>
<span class="tx" style="left:941.80px;top:214.80px;font-size:14px;color:#118dff;font-weight:bold;transform:scaleX(0.9407);">2010</span>
<span class="tx" style="left:994.60px;top:214.80px;font-size:14px;color:#118dff;font-weight:bold;transform:scaleX(0.9645);">2011</span>
<span class="tx" style="left:1047.40px;top:214.80px;font-size:14px;color:#118dff;font-weight:bold;transform:scaleX(0.9407);">2012</span>
<span class="tx" style="left:1100.20px;top:214.80px;font-size:14px;color:#118dff;font-weight:bold;transform:scaleX(0.9407);">2013</span>
<span class="tx" style="left:1153.00px;top:214.80px;font-size:14px;color:#118dff;font-weight:bold;transform:scaleX(0.9407);">2014</span>
<span class="tx" style="left:1205.80px;top:214.80px;font-size:14px;color:#118dff;font-weight:bold;transform:scaleX(0.9407);">2015</span>
</body></html>
